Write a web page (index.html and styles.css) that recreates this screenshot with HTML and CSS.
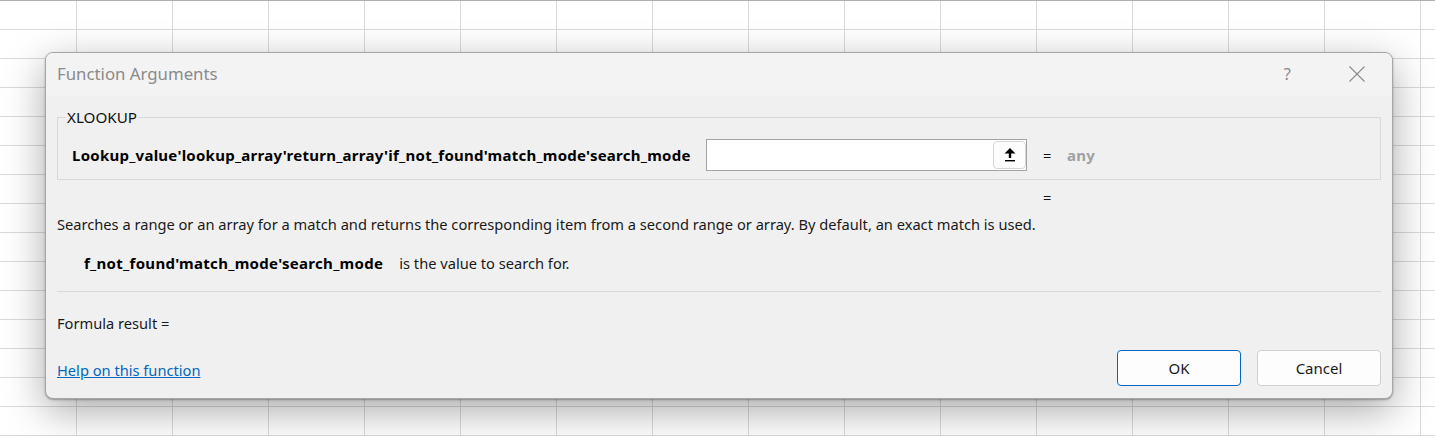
FILE: index.html
```html
<!DOCTYPE html>
<html>
<head>
<meta charset="utf-8">
<link rel="stylesheet" href="styles.css">
</head>
<body>
<div class="topline"></div>
<div class="sheet">
  <div class="dialog">
    <div class="titlebar">
      <span class="title">Function Arguments</span>
      <div class="controls">
        <span class="help">?</span>
        <svg class="close" width="16" height="16" viewBox="0 0 16 16"><path d="M0.5 0.5 L15.5 15.5 M15.5 0.5 L0.5 15.5" stroke="#8a8a8a" stroke-width="1.1" fill="none"/></svg>
      </div>
    </div>
    <div class="content">
      <fieldset class="group">
        <legend>XLOOKUP</legend>
        <div class="argrow">
          <span class="arglabel">Lookup_value'lookup_array'return_array'if_not_found'match_mode'search_mode</span>
          <div class="refinput">
            <div class="refbtn">
              <svg width="12" height="14" viewBox="0 0 12 14"><path d="M6 0 L11.5 5.5 L7.2 5.5 L7.2 10 L4.8 10 L4.8 5.5 L0.5 5.5 Z" fill="#000"/><rect x="1" y="12" width="10" height="1.4" fill="#000"/></svg>
            </div>
          </div>
          <span class="eq">=</span>
          <span class="any">any</span>
        </div>
      </fieldset>
      <div class="eqrow"><span class="eq">=</span></div>
      <p class="desc">Searches a range or an array for a match and returns the corresponding item from a second range or array. By default, an exact match is used.</p>
      <div class="argdesc"><b class="argname">f_not_found'match_mode'search_mode</b><span>is the value to search for.</span></div>
      <div class="sep"></div>
      <div class="result">Formula result =</div>
      <div class="footer">
        <a class="helplink" href="#">Help on this function</a>
        <div class="buttons">
          <button class="btn btn-ok">OK</button>
          <button class="btn">Cancel</button>
        </div>
      </div>
    </div>
  </div>
</div>
</body>
</html>
```
FILE: styles.css
```css
html, body {
  margin: 0;
  padding: 0;
  height: 100%;
}
body {
  width: 1435px;
  height: 436px;
  overflow: hidden;
  background-color: #ffffff;
  background-image:
    linear-gradient(to right, #dadada 1px, transparent 1px),
    linear-gradient(to bottom, #dadada 1px, transparent 1px);
  background-size: 96px 29px, 96px 29px;
  background-position: 76px 0, 0 0;
  font-family: "Noto Sans", "Open Sans", sans-serif;
  font-size: 14.65px;
  color: #1a1a1a;
}
.topline {
  height: 1px;
  background: #b0b0b0;
}
.sheet {
  padding: 51px 0 0 45px;
}
.dialog {
  box-sizing: border-box;
  width: 1348px;
  height: 347px;
  border: 1px solid #a6a6a6;
  border-radius: 8px;
  background: #f0f0f0;
  box-shadow: 0 1px 2px rgba(0, 0, 0, 0.3), 0 12px 40px rgba(0, 0, 0, 0.34);
  overflow: hidden;
}
.titlebar {
  height: 43px;
  background: #f3f3f3;
  display: flex;
  align-items: center;
  justify-content: space-between;
  padding: 0 27px 0 11px;
}
.title {
  color: #8a8a8a;
  font-size: 16.8px;
  line-height: 20px;
  margin-top: -2px;
}
.controls {
  display: flex;
  align-items: center;
  gap: 58px;
  margin-top: -2px;
}
.help {
  color: #8a8a8a;
  font-size: 16.5px;
  line-height: 20px;
}
.close {
  display: block;
}
.content {
  padding: 11px 11px 0 11px;
}
.group {
  margin: 0;
  padding: 0;
  border: 1px solid #d9d9d9;
  min-width: 0;
}
.group legend {
  margin-left: 8px;
  padding: 0 1px;
  font-size: 15.2px;
  line-height: 20px;
  color: #111;
}
.argrow {
  display: flex;
  align-items: center;
  padding: 12px 0 8px 14px;
  height: 32px;
}
.arglabel {
  width: 634px;
  flex: 0 0 634px;
  font-weight: bold;
  font-size: 15px;
  letter-spacing: 0.25px;
  white-space: nowrap;
  color: #000;
}
.refinput {
  box-sizing: border-box;
  width: 321px;
  height: 32px;
  border: 1px solid #a3a3a3;
  background: #fff;
  display: flex;
  justify-content: flex-end;
  padding: 1px 0 1px 0;
}
.refbtn {
  box-sizing: border-box;
  width: 33px;
  border: 1px solid #d6d6d6;
  border-radius: 4px;
  background: #fdfdfd;
  display: flex;
  align-items: center;
  justify-content: center;
}
.refbtn svg {
  display: block;
}
.eq {
  width: 24px;
  margin-left: 16px;
  color: #111;
}
.any {
  font-weight: bold;
  color: #a0a0a0;
  font-size: 15px;
  letter-spacing: 0.25px;
}
.eqrow {
  margin-top: 7px;
  height: 20px;
  line-height: 20px;
  padding-left: 986px;
}
.eqrow .eq {
  margin-left: 0;
}
.desc {
  margin: 7px 0 0 0;
  line-height: 20px;
  white-space: nowrap;
}
.argdesc {
  margin-top: 19px;
  line-height: 20px;
  padding-left: 27px;
  display: flex;
  gap: 16px;
}
.argname {
  color: #000;
  font-size: 15px;
  letter-spacing: 0.3px;
}
.sep {
  margin-top: 18px;
  height: 1px;
  background: #d9d9d9;
}
.result {
  margin-top: 21px;
  line-height: 20px;
}
.footer {
  margin-top: 17px;
  display: flex;
  align-items: center;
  justify-content: space-between;
}
.helplink {
  color: #0067c0;
  text-decoration: underline;
  line-height: 20px;
  margin-top: 3px;
}
.buttons {
  display: flex;
  gap: 16px;
}
.btn {
  box-sizing: border-box;
  width: 124px;
  height: 36px;
  border: 1px solid #d0d0d0;
  border-radius: 4px;
  background: #fdfdfd;
  font-family: "Noto Sans", "Open Sans", sans-serif;
  font-size: 15px;
  color: #1a1a1a;
  padding: 0;
}
.btn-ok {
  border-color: #0067c0;
}
```
